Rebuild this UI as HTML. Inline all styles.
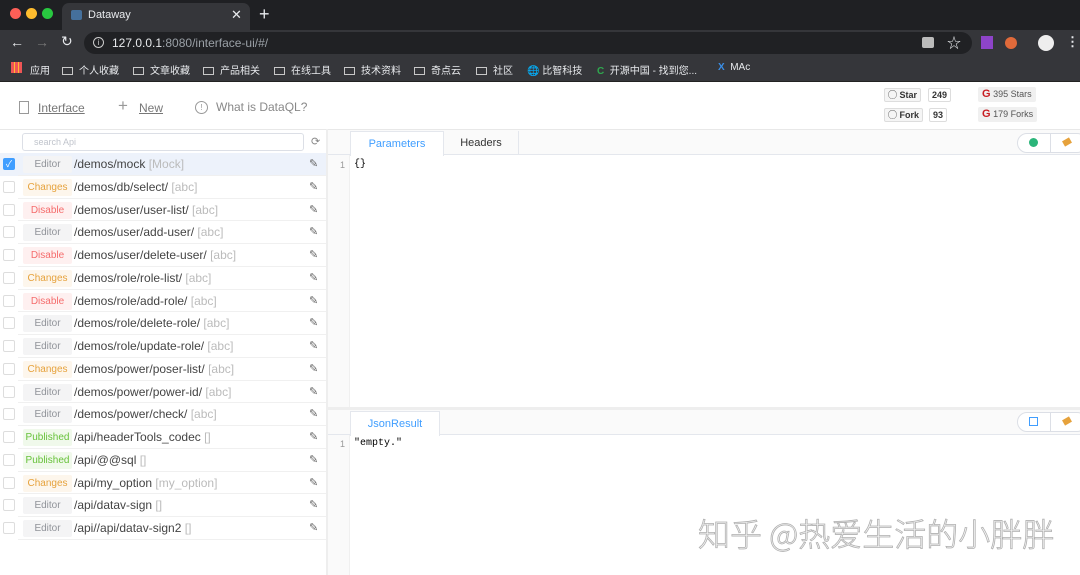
<!DOCTYPE html>
<html><head><meta charset="utf-8"><style>
*{box-sizing:border-box;margin:0;padding:0}
body{width:1080px;height:575px;overflow:hidden;background:#fff;font-family:"Liberation Sans","Noto Sans CJK SC",sans-serif;position:relative}
.abs{position:absolute}
#tabbar{left:0;top:0;width:1080px;height:30px;background:#1f2023}
#addr{left:0;top:30px;width:1080px;height:26px;background:#35363a}
#bm{left:0;top:56px;width:1080px;height:26px;background:#35363a;border-bottom:1px solid #222}
.bmi{position:absolute;top:62px;color:#e8eaed;font-size:10px;white-space:nowrap}
.fold{display:inline-block;width:11px;height:8px;border:1px solid #c8c8c8;margin-right:6px;vertical-align:-1px}
.row{position:absolute;left:0;width:326px;height:22.75px;font-size:12px;color:#444}
.row .cb{position:absolute;left:3px;top:5px;width:12px;height:12px;border:1px solid #ddd;background:#fff;border-radius:2px}
.row .tag{position:absolute;left:23px;top:3px;width:49px;height:17px;font-size:10px;text-align:center;line-height:17px;border-radius:2px}
.row .p{position:absolute;left:74px;top:4px;white-space:nowrap}
.row .p i{font-style:normal;color:#bbb}
.row .ed{position:absolute;left:309px;top:4px;font-size:11px;color:#666}
.row .ln{position:absolute;left:18px;right:0;bottom:0;border-bottom:1px solid #f0f0f0}
.E{background:#f4f4f5;color:#909399}
.C{background:#fdf6ec;color:#e6a23c}
.D{background:#fef0f0;color:#f56c6c}
.P{background:#f0f9eb;color:#67c23a}
.gh{position:absolute;font-size:9px;font-weight:bold;color:#333;border:1px solid #ddd;border-radius:2px;background:#f5f5f5;height:14px;line-height:12px;padding:0 3px}
.gee{position:absolute;font-size:9px;color:#555;background:#f0f0f0;border-radius:2px;height:15px;line-height:15px;padding:0 4px}
.gee b{color:#c71d23;font-size:11px}
</style></head><body>
<div id="tabbar" class="abs">
 <div class="abs" style="left:10px;top:8px;width:11px;height:11px;border-radius:50%;background:#fe5f57"></div>
 <div class="abs" style="left:26px;top:8px;width:11px;height:11px;border-radius:50%;background:#febc2e"></div>
 <div class="abs" style="left:42px;top:8px;width:11px;height:11px;border-radius:50%;background:#28c840"></div>
 <div class="abs" style="left:62px;top:3px;width:188px;height:27px;background:#35363a;border-radius:7px 7px 0 0"></div>
 <div class="abs" style="left:71px;top:10px;width:11px;height:10px;background:#4a7fb5;border-radius:2px;opacity:.8"></div>
 <div class="abs" style="left:88px;top:9px;color:#e8eaed;font-size:11px">Dataway</div>
 <div class="abs" style="left:231px;top:7px;color:#e8eaed;font-size:13px">✕</div>
 <div class="abs" style="left:259px;top:4px;color:#e8eaed;font-size:18px">+</div>
</div>
<div id="addr" class="abs">
 <div class="abs" style="left:10px;top:4px;color:#e8eaed;font-size:14px">←</div>
 <div class="abs" style="left:35px;top:4px;color:#777;font-size:14px">→</div>
 <div class="abs" style="left:61px;top:3px;color:#e8eaed;font-size:14px">↻</div>
 <div class="abs" style="left:84px;top:2px;width:888px;height:22px;background:#202124;border-radius:11px"></div>
 <div class="abs" style="left:93px;top:7px;width:11px;height:11px;border:1px solid #ccc;border-radius:50%;font-size:8px;color:#ccc;text-align:center;line-height:9px">i</div>
 <div class="abs" style="left:112px;top:6px;color:#e8eaed;font-size:12px">127.0.0.1<span style="color:#9aa0a6">:8080/interface-ui/#/</span></div>
 <div class="abs" style="left:922px;top:7px;width:12px;height:11px;background:#bbb;border-radius:2px"></div>
 <div class="abs" style="left:947px;top:3px;color:#e8eaed;font-size:14px">☆</div>
 <div class="abs" style="left:981px;top:6px;width:12px;height:13px;background:#8e44c9"></div>
 <div class="abs" style="left:1005px;top:7px;width:12px;height:12px;border-radius:50%;background:#e06a3a"></div>
 <div class="abs" style="left:1038px;top:5px;width:16px;height:16px;border-radius:50%;background:#eee"></div>
 <div class="abs" style="left:1066px;top:4px;color:#e8eaed;font-size:13px;font-weight:bold">⋮</div>
</div>
<div id="bm" class="abs"></div>
<div class="abs" style="left:11px;top:62px;width:11px;height:11px;background:repeating-linear-gradient(90deg,#e55 0 3px,transparent 3px 4px),#fb3"></div>
<div class="bmi" style="left:30px">应用</div>
<div class="bmi" style="left:62px"><span class="fold"></span>个人收藏</div>
<div class="bmi" style="left:133px"><span class="fold"></span>文章收藏</div>
<div class="bmi" style="left:203px"><span class="fold"></span>产品相关</div>
<div class="bmi" style="left:274px"><span class="fold"></span>在线工具</div>
<div class="bmi" style="left:344px"><span class="fold"></span>技术资料</div>
<div class="bmi" style="left:414px"><span class="fold"></span>奇点云</div>
<div class="bmi" style="left:476px"><span class="fold"></span>社区</div>
<div class="bmi" style="left:527px">🌐 比智科技</div>
<div class="bmi" style="left:597px"><span style="color:#2fa84f;font-weight:bold">C</span>&nbsp; 开源中国 - 找到您...</div>
<div class="bmi" style="left:718px"><span style="color:#3a8ee6;font-weight:bold">X</span>&nbsp; MAc</div>

<div class="abs" style="left:19px;top:101px;width:10px;height:13px;border:1px solid #999"></div>
<div class="abs" style="left:38px;top:101px;font-size:12px;color:#777;text-decoration:underline">Interface</div>
<div class="abs" style="left:118px;top:96px;font-size:17px;color:#999;font-weight:300">+</div>
<div class="abs" style="left:139px;top:101px;font-size:12px;color:#777;text-decoration:underline">New</div>
<div class="abs" style="left:195px;top:101px;width:13px;height:13px;border:1px solid #999;border-radius:50%;font-size:8px;color:#999;text-align:center;line-height:11px">!</div>
<div class="abs" style="left:216px;top:100px;font-size:12px;color:#888">What is DataQL?</div>
<div class="gh" style="left:884px;top:88px">◯ Star</div><div class="gh" style="left:928px;top:88px;background:#fff">249</div>
<div class="gh" style="left:884px;top:108px">◯ Fork</div><div class="gh" style="left:929px;top:108px;background:#fff">93</div>
<div class="gee" style="left:978px;top:87px"><b>G</b> 395 Stars</div>
<div class="gee" style="left:978px;top:107px"><b>G</b> 179 Forks</div>
<div class="abs" style="left:0;top:129px;width:1080px;border-top:1px solid #e8e8e8"></div>

<div class="abs" style="left:326px;top:129px;width:2px;height:446px;background:#eee"></div>
<div class="abs" style="left:22px;top:133px;width:282px;height:18px;border:1px solid #dcdfe6;border-radius:3px;font-size:9px;color:#c0c4cc;padding:3px 11px">search Api</div>
<div class="abs" style="left:311px;top:135px;font-size:11px;color:#888">⟳</div>
<div class="abs" style="left:0;top:153px;width:326px;height:22.75px;background:#edf2fb"></div>
<div id="rows"></div>

<div class="abs" style="left:328px;top:130px;width:752px;height:25px;border-bottom:1px solid #e4e7ed;background:#fafafa"></div>
<div class="abs" style="left:350px;top:131px;width:94px;height:25px;background:#fff;border:1px solid #e4e7ed;border-bottom:none;font-size:11px;color:#409eff;text-align:center;line-height:25px">Parameters</div>
<div class="abs" style="left:444px;top:131px;width:75px;height:24px;border-right:1px solid #e4e7ed;font-size:11px;color:#333;text-align:center;line-height:25px">Headers</div>
<div class="abs" style="left:1017px;top:133px;width:70px;height:20px;border:1px solid #dcdfe6;border-radius:10px;background:#fff"></div>
<div class="abs" style="left:1029px;top:138px;width:9px;height:9px;border-radius:50%;background:#2bb57a"></div>
<div class="abs" style="left:1050px;top:133px;height:20px;border-left:1px solid #dcdfe6"></div>
<div class="abs" style="left:1063px;top:139px;width:8px;height:6px;background:#e6a23c;transform:rotate(-30deg)"></div>
<div class="abs" style="left:328px;top:155px;width:22px;height:253px;background:#fafafa;border-right:1px solid #f0f0f0"></div>
<div class="abs" style="left:340px;top:160px;font-size:9px;color:#999">1</div>
<div class="abs" style="left:354px;top:159px;font-size:10px;font-family:'Liberation Mono',monospace;color:#000">{}</div>

<div class="abs" style="left:328px;top:407px;width:752px;height:3px;background:#eee"></div>
<div class="abs" style="left:328px;top:410px;width:752px;height:25px;border-bottom:1px solid #e4e7ed;background:#fafafa"></div>
<div class="abs" style="left:350px;top:411px;width:90px;height:25px;background:#fff;border:1px solid #e4e7ed;border-bottom:none;font-size:11px;color:#409eff;text-align:center;line-height:25px">JsonResult</div>
<div class="abs" style="left:1017px;top:412px;width:70px;height:20px;border:1px solid #dcdfe6;border-radius:10px;background:#fff"></div>
<div class="abs" style="left:1029px;top:417px;width:9px;height:9px;border:1px solid #409eff"></div>
<div class="abs" style="left:1050px;top:412px;height:20px;border-left:1px solid #dcdfe6"></div>
<div class="abs" style="left:1063px;top:418px;width:8px;height:6px;background:#e6a23c;transform:rotate(-30deg)"></div>
<div class="abs" style="left:328px;top:435px;width:22px;height:140px;background:#fafafa;border-right:1px solid #f0f0f0"></div>
<div class="abs" style="left:340px;top:439px;font-size:9px;color:#999">1</div>
<div class="abs" style="left:354px;top:438px;font-size:10px;font-family:'Liberation Mono',monospace;color:#000">"empty."</div>

<div class="abs" style="left:698px;top:510px;font-size:32px;color:#f6f6f6;-webkit-text-stroke:0.8px #b0b0b0;white-space:nowrap;font-family:'Noto Sans CJK SC',sans-serif;font-weight:300">知乎 @热爱生活的小胖胖</div>

<script>
var d=[["E","/demos/mock","[Mock]"],["C","/demos/db/select/","[abc]"],["D","/demos/user/user-list/","[abc]"],["E","/demos/user/add-user/","[abc]"],["D","/demos/user/delete-user/","[abc]"],["C","/demos/role/role-list/","[abc]"],["D","/demos/role/add-role/","[abc]"],["E","/demos/role/delete-role/","[abc]"],["E","/demos/role/update-role/","[abc]"],["C","/demos/power/poser-list/","[abc]"],["E","/demos/power/power-id/","[abc]"],["E","/demos/power/check/","[abc]"],["P","/api/headerTools_codec","[]"],["P","/api/@@sql","[]"],["C","/api/my_option","[my_option]"],["E","/api/datav-sign","[]"],["E","/api//api/datav-sign2","[]"]];
var n={E:"Editor",C:"Changes",D:"Disable",P:"Published"},h="";
d.forEach(function(r,i){h+='<div class="row" style="top:'+(153+i*22.75)+'px"><div class="cb"'+(i==0?' style="background:#409eff;border-color:#409eff;color:#fff;font-size:9px;text-align:center;line-height:10px">✓':'>')+'</div><div class="tag '+r[0]+'">'+n[r[0]]+'</div><div class="p">'+r[1]+' <i>'+r[2]+'</i></div><div class="ed">✎</div><div class="ln"></div></div>'});
document.getElementById("rows").innerHTML=h;
</script>
</body></html>
